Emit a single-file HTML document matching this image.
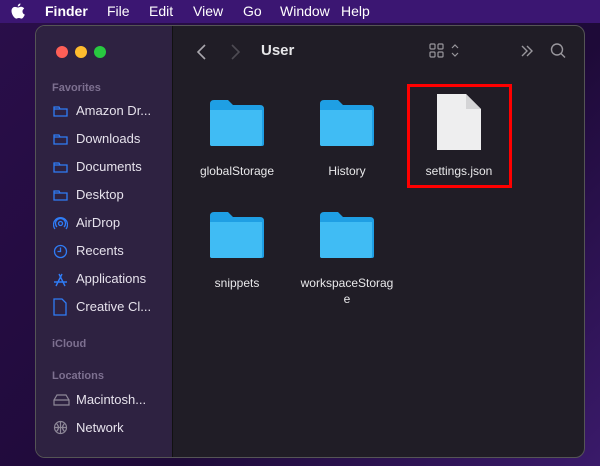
<!DOCTYPE html>
<html><head><style>
*{margin:0;padding:0;box-sizing:border-box}
body{width:600px;height:466px;overflow:hidden;background:linear-gradient(135deg,#2a0e4a,#1e0a38 60%,#3a1a6a);font-family:"Liberation Sans",sans-serif;position:relative}
.menu{position:absolute;left:0;top:0;width:600px;height:23px;background:#3b1672;color:#fff;font-size:14px}
.menu span{position:absolute;top:3px}
.win{position:absolute;left:35px;top:25px;width:550px;height:433px;border-radius:10px;background:#201d26;border:1px solid #555;overflow:hidden}
.side{position:absolute;left:0;top:0;width:137px;height:100%;background:#2e2241;border-right:1px solid #111}
.dot{position:absolute;top:20px;width:12px;height:12px;border-radius:50%}
.sh{position:absolute;left:16px;font-size:11px;color:#7d7090;font-weight:bold}
.it{position:absolute;left:40px;font-size:13px;color:#e6e2ec}
.ic{position:absolute;left:17px}
.lbl{position:absolute;font-size:12px;color:#e8e8ea;text-align:center;width:100px;line-height:16px}
.fold{position:absolute;width:58px;height:50px}
</style></head><body>
<div class="menu">
<svg style="position:absolute;left:11px;top:3px" width="14" height="16" viewBox="0 0 14 16"><path d="M9.5 0.5c0 1.5-1.2 3-2.7 3 -0.2-1.5 1.2-3 2.7-3z M7 4.5c1 0 2-0.7 3-0.7 1.3 0 2.5 0.7 3.2 1.8-2.6 1.5-2.1 5 0.6 6-0.7 1.8-2 4-3.3 4-1 0-1.4-0.6-2.6-0.6-1.2 0-1.6 0.6-2.6 0.6C3.6 15.6 0.5 11.5 0.5 8c0-2.6 1.7-4.1 3.4-4.1 1.1 0 2.1 0.6 3.1 0.6z" fill="#fff"/></svg>
<span style="left:45px;font-weight:bold">Finder</span>
<span style="left:107px">File</span>
<span style="left:149px">Edit</span>
<span style="left:193px">View</span>
<span style="left:243px">Go</span>
<span style="left:280px">Window</span>
<span style="left:341px">Help</span>
</div>
<div class="win">
<div class="side">
<div class="dot" style="left:20px;background:#fe5f57"></div>
<div class="dot" style="left:39px;background:#febc2e"></div>
<div class="dot" style="left:58px;background:#28c840"></div>
<div class="sh" style="top:56px">Favorites</div>
<svg class="ic" style="top:79px" width="15" height="12"><path d="M1 2h5l1 2h7v7H1z M1 4h13" fill="none" stroke="#2f7cf6" stroke-width="1.3"/></svg><div class="it" style="top:77px">Amazon Dr...</div>
<svg class="ic" style="top:107px" width="15" height="12"><path d="M1 2h5l1 2h7v7H1z M1 4h13" fill="none" stroke="#2f7cf6" stroke-width="1.3"/></svg><div class="it" style="top:105px">Downloads</div>
<svg class="ic" style="top:135px" width="15" height="12"><path d="M1 2h5l1 2h7v7H1z M1 4h13" fill="none" stroke="#2f7cf6" stroke-width="1.3"/></svg><div class="it" style="top:133px">Documents</div>
<svg class="ic" style="top:163px" width="15" height="12"><path d="M1 2h5l1 2h7v7H1z M1 4h13" fill="none" stroke="#2f7cf6" stroke-width="1.3"/></svg><div class="it" style="top:161px">Desktop</div>
<svg class="ic" style="top:190px" width="15" height="15"><g fill="none" stroke="#2f7cf6" stroke-width="1.3"><circle cx="7.5" cy="7.5" r="2"/><path d="M4 11a5 5 0 1 1 7 0M2 13a7 7 0 1 1 11 0"/></g></svg><div class="it" style="top:189px">AirDrop</div>
<svg class="ic" style="top:218px" width="15" height="15"><g fill="none" stroke="#2f7cf6" stroke-width="1.3"><circle cx="7.5" cy="7.5" r="6"/><path d="M7.5 3.5v4h-3"/></g></svg><div class="it" style="top:217px">Recents</div>
<svg class="ic" style="top:246px" width="15" height="15"><path d="M3 14L9 2M12 14L6 2M1 10h13" fill="none" stroke="#2f7cf6" stroke-width="1.4"/></svg><div class="it" style="top:245px">Applications</div>
<svg class="ic" style="top:272px" width="14" height="18"><path d="M1 1h8l4 4v12H1z" fill="none" stroke="#2f7cf6" stroke-width="1.3"/></svg><div class="it" style="top:273px">Creative Cl...</div>
<div class="sh" style="top:312px">iCloud</div>
<div class="sh" style="top:344px">Locations</div>
<svg class="ic" style="top:368px" width="17" height="12"><path d="M1 6L4 1h9l3 5v5H1z M1 6h15" fill="none" stroke="#8e8898" stroke-width="1.2"/></svg><div class="it" style="top:366px">Macintosh...</div>
<svg class="ic" style="top:394px" width="15" height="15"><g fill="none" stroke="#8e8898" stroke-width="1.2"><circle cx="7.5" cy="7.5" r="6"/><path d="M1.5 7.5h12M7.5 1.5v12M3.5 3.5q4 4 0 8M11.5 3.5q-4 4 0 8"/></g></svg><div class="it" style="top:394px">Network</div>
</div>
<svg style="position:absolute;left:158px;top:17px" width="60" height="18"><path d="M11 2L4 9l7 7" fill="none" stroke="#a9a7ad" stroke-width="1.6"/><path d="M38 2l7 7-7 7" fill="none" stroke="#4e4b53" stroke-width="1.6"/></svg>
<div style="position:absolute;left:225px;top:16px;color:#e6e6e8;font-size:15px;font-weight:bold">User</div>
<svg style="position:absolute;left:393px;top:16px" width="40" height="18"><g fill="none" stroke="#99979d" stroke-width="1.2"><rect x="1" y="2" width="5" height="5" rx="1"/><rect x="9" y="2" width="5" height="5" rx="1"/><rect x="1" y="10" width="5" height="5" rx="1"/><rect x="9" y="10" width="5" height="5" rx="1"/><path d="M23 6l3-3 3 3M23 11l3 3 3-3"/></g></svg>
<svg style="position:absolute;left:484px;top:16px" width="50" height="18"><g fill="none" stroke="#99979d" stroke-width="1.4"><path d="M2 4l5 5-5 5M7 4l5 5-5 5"/><circle cx="37" cy="7.5" r="5.5"/><path d="M41 11.5l4 4"/></g></svg>
<svg class="fold" style="left:172px;top:72px" viewBox="0 0 58 50"><path d="M2 6q0-4 4-4h14l5 5h27q4 0 4 4v35q0 2-2 2H4q-2 0-2-2z" fill="#1f9fe4"/><path d="M2 12h52v34q0 2-2 2H4q-2 0-2-2z" fill="#40bcf4"/></svg>
<svg class="fold" style="left:282px;top:72px" viewBox="0 0 58 50"><path d="M2 6q0-4 4-4h14l5 5h27q4 0 4 4v35q0 2-2 2H4q-2 0-2-2z" fill="#1f9fe4"/><path d="M2 12h52v34q0 2-2 2H4q-2 0-2-2z" fill="#40bcf4"/></svg>
<svg class="fold" style="left:172px;top:184px" viewBox="0 0 58 50"><path d="M2 6q0-4 4-4h14l5 5h27q4 0 4 4v35q0 2-2 2H4q-2 0-2-2z" fill="#1f9fe4"/><path d="M2 12h52v34q0 2-2 2H4q-2 0-2-2z" fill="#40bcf4"/></svg>
<svg class="fold" style="left:282px;top:184px" viewBox="0 0 58 50"><path d="M2 6q0-4 4-4h14l5 5h27q4 0 4 4v35q0 2-2 2H4q-2 0-2-2z" fill="#1f9fe4"/><path d="M2 12h52v34q0 2-2 2H4q-2 0-2-2z" fill="#40bcf4"/></svg>
<div class="lbl" style="left:151px;top:137px">globalStorage</div>
<div class="lbl" style="left:261px;top:137px">History</div>
<div class="lbl" style="left:151px;top:249px">snippets</div>
<div class="lbl" style="left:261px;top:249px">workspaceStorag<br>e</div>
<div style="position:absolute;left:371px;top:58px;width:105px;height:104px;border:3px solid #f00"></div>
<svg style="position:absolute;left:400px;top:67px" width="46" height="58"><path d="M1 1h29l15 15v41H1z" fill="#eeeeef"/><path d="M30 1v15h15z" fill="#d4d4d6"/></svg>
<div class="lbl" style="left:373px;top:137px">settings.json</div>
</div>
</body></html>
